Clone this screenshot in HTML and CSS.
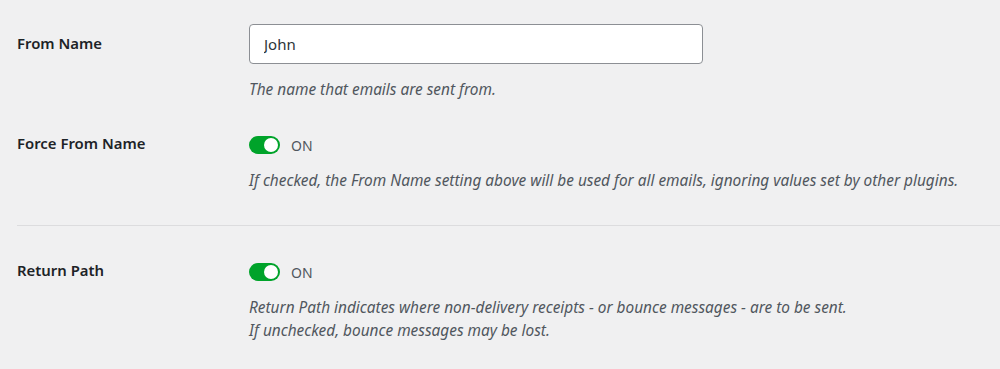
FILE: index.html
```html
<!DOCTYPE html>
<html>
    <head>
        <title>Mail settings</title>
        <link rel="stylesheet" href="styles.css">
    </head>

    <body>
        <div class="settings">
            <div class="row first">
                <div class="label">From Name</div>
                <div class="field">
                    <input class="text" type="text" value="John">
                    <p class="description">The name that emails are sent from.</p>
                </div>
            </div>
            <div class="row">
                <div class="label">Force From Name</div>
                <div class="field">
                    <label class="toggle"><span class="switch"></span><span class="state">ON</span></label>
                    <p class="description">If checked, the From Name setting above will be used for all emails, ignoring values set by other plugins.</p>
                </div>
            </div>
            <hr class="sep">
            <div class="row">
                <div class="label">Return Path</div>
                <div class="field">
                    <label class="toggle"><span class="switch"></span><span class="state">ON</span></label>
                    <p class="description">Return Path indicates where non-delivery receipts - or bounce messages - are to be sent.<br>If unchecked, bounce messages may be lost.</p>
                </div>
            </div>
        </div>
    </body>
</html>
```

FILE: styles.css
```css
body{margin: 0;background-color: #f0f0f1;font-family: "Noto Sans", "Open Sans", sans-serif;color: #1d2327;font-size: 14px;}
.settings{padding: 24px 0 0 17px;}
.row{display: flex;}
.label{width: 232px;flex: none;font-weight: 600;font-size: 14.9px;line-height: 20px;}
.row + .row{margin-top: 32px;}
.row.first .label{padding-top: 9px;}
.field{flex: 1;}
input.text{display: block;box-sizing: border-box;width: 454px;height: 40px;margin: 0;padding: 0 14px;border: 1px solid #8c8f94;border-radius: 4px;background: #fff;font-family: inherit;font-size: 15px;color: #2c3338;}
.description{margin: 14px 0 0;font-style: italic;color: #50575e;font-size: 15.4px;line-height: 23px;}
.toggle{display: flex;align-items: center;height: 20px;margin-top: 2px;}
.switch{position: relative;width: 31px;height: 18px;border-radius: 9px;background-color: #00a32a;}
.switch::after{content: "";position: absolute;right: 2px;top: 2px;width: 14px;height: 14px;border-radius: 50%;background: #fff;}
.state{margin-left: 11px;font-size: 14px;color: #50575e;}
.sep{border: 0;border-top: 1px solid #dcdcde;margin: 33px 0 34px;}
```
